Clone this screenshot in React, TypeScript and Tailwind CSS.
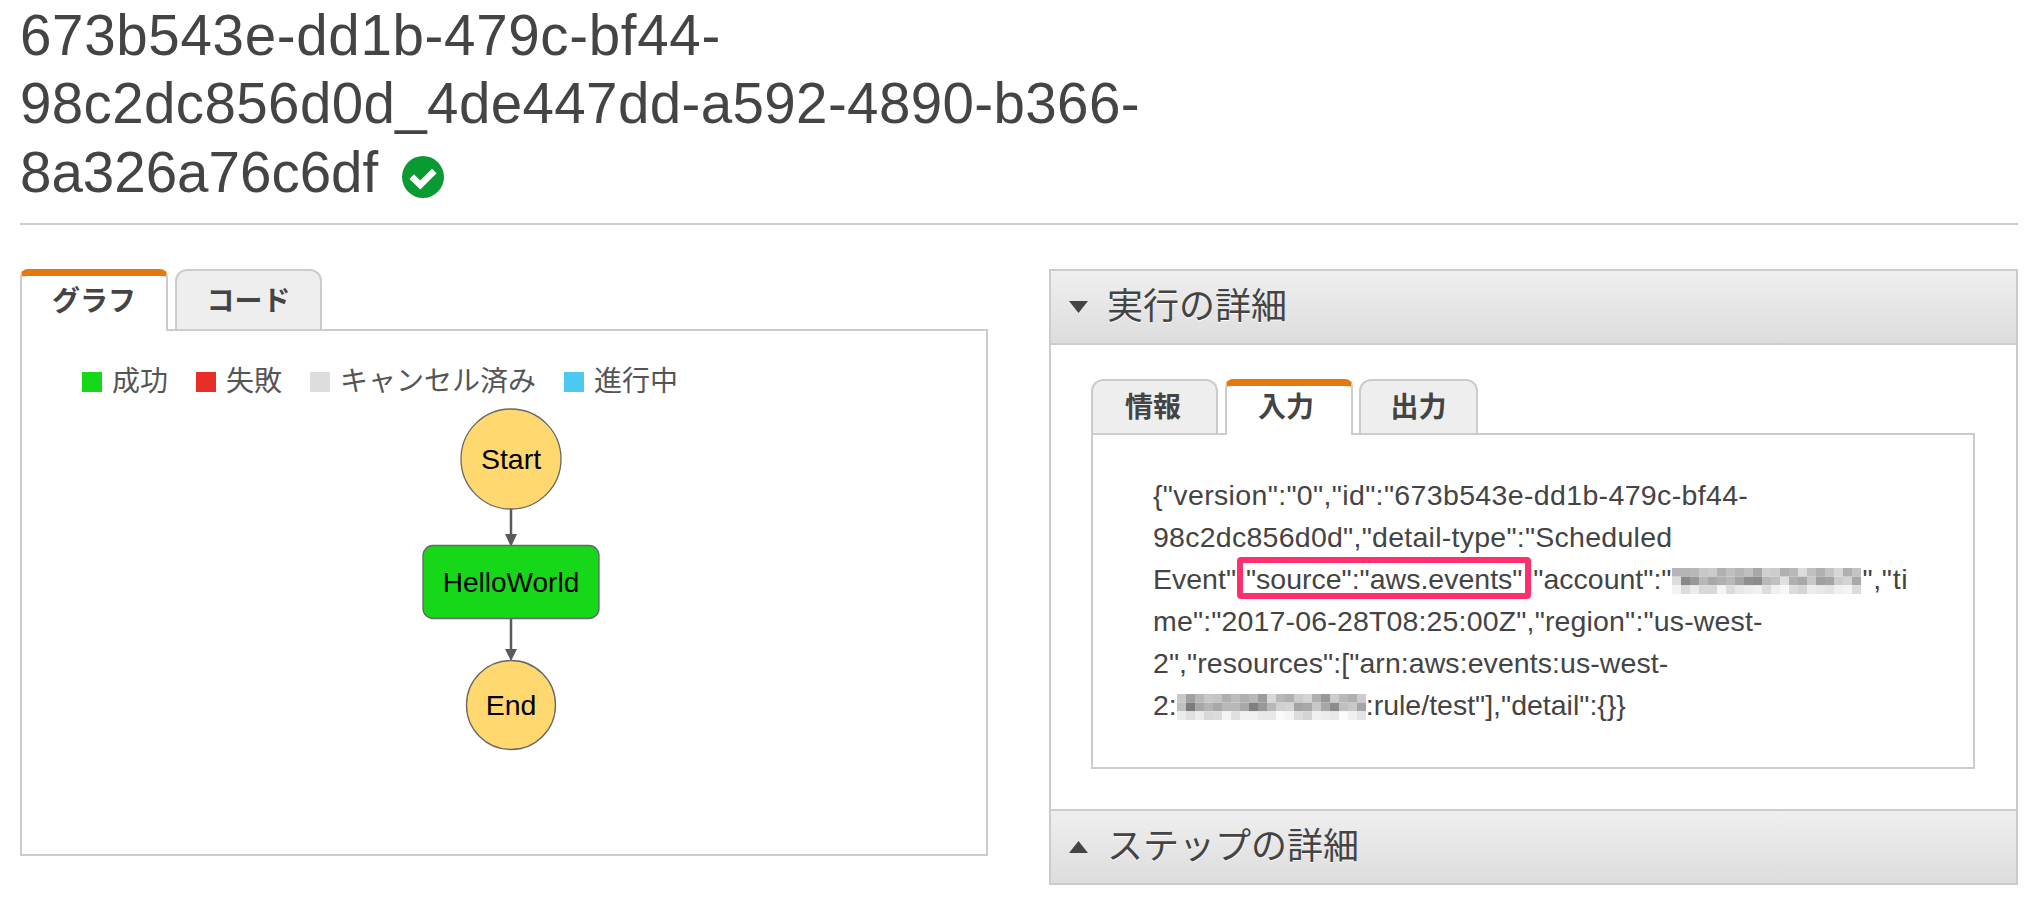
const blurA = [
  ["b5","b5","b8","c8","cc","b0","c0","b5","c0","a8","d0","cc","b0","b8","dc","c0","b0","c4","d8","b0","c4"],
  ["dc","88","98","b8","a8","b0","b8","a4","90","8c","b8","c0","e0","b0","a8","c8","a0","a4","cc","d4","a8"],
  ["f4","dc","ec","d8","d8","f4","dc","e8","ec","f0","dc","f0","f8","dc","d4","ec","e8","e4","f0","f4","dc"],
];
const blurB = [
  ["c8","a0","b8","c8","c4","b0","bc","b0","b8","9c","d8","b8","b0","cc","d4","b0","98","cc","b8","b0","cc"],
  ["c0","7c","a8","b4","a8","b8","b8","a8","80","98","b8","d0","d4","a4","a8","c8","a8","8c","c0","c8","a4"],
  ["ec","e0","ec","d8","dc","f4","e0","f0","f0","e8","e8","fa","f4","dc","d4","f0","ec","e8","fb","f0","e4"],
];

function Blur({ cells, className }: { cells: string[][]; className?: string }) {
  return (
    <svg width="189" height="26" viewBox="0 0 189 26" className={`inline-block align-middle ${className ?? ""}`}>
      {cells.map((row, y) =>
        row.map((c, x) => <rect key={`${x}-${y}`} x={x * 9} y={y * 8.67} width="9" height="8.67" fill={`#${c}${c}${c}`} />),
      )}
    </svg>
  );
}

function OuterTab({ label, active, className }: { label: string; active?: boolean; className: string }) {
  return (
    <div
      className={
        active
          ? `${className} relative -mb-[2px] h-[62px] rounded-t-[8px] border-x-2 border-t-[7px] border-x-[#cccccc] border-t-[#e47911] bg-white text-center text-[28px] leading-[51px] font-bold text-[#444444]`
          : `${className} h-[60px] rounded-t-[12px] border-x-2 border-t-2 border-[#cccccc] bg-[#eeeeee] text-center text-[28px] leading-[61px] font-bold text-[#444444]`
      }
    >
      {label}
    </div>
  );
}

function InnerTab({ label, active, className }: { label: string; active?: boolean; className: string }) {
  return (
    <div
      className={
        active
          ? `${className} relative -mb-[2px] h-[56px] rounded-t-[8px] border-x-2 border-t-[7px] border-x-[#cccccc] border-t-[#e47911] bg-white text-center text-[28px] leading-[43px] font-bold text-[#444444]`
          : `${className} h-[54px] rounded-t-[12px] border-x-2 border-t-2 border-[#cccccc] bg-[#eeeeee] text-center text-[28px] leading-[53px] font-bold text-[#444444]`
      }
    >
      {label}
    </div>
  );
}

function Legend({ color, label }: { color: string; label: string }) {
  return (
    <div className="flex items-center gap-[10px]">
      <span className={`h-[20px] w-[20px] ${color}`} />
      <span className="text-[28px] leading-[28px] text-[#555555]">{label}</span>
    </div>
  );
}

function Header({ label, up }: { label: string; up?: boolean }) {
  return (
    <div className="flex h-[72px] items-center gap-[19px] bg-gradient-to-b from-[#efefef] to-[#dddddd] pl-[18px]">
      <svg width="19" height="12" viewBox="0 0 19 12">
        <path d={up ? "M0 12 L9.5 0 L19 12 Z" : "M0 0 L19 0 L9.5 12 Z"} fill="#444444" />
      </svg>
      <span className="text-[36px] leading-[44px] text-[#444444] [text-shadow:0_1px_0_#ffffff]">{label}</span>
    </div>
  );
}

export default function App() {
  return (
    <div className="h-[902px] w-[2032px] overflow-hidden bg-white font-['Liberation_Sans','Noto_Sans_CJK_JP',sans-serif]">
      <div className="mx-[20px]">
        <h1 className="h-[223px] pt-[1.5px] text-[56.5px] leading-[68.5px] font-normal text-[#444444]">
          <span className="block tracking-[0.67px]">673b543e-dd1b-479c-bf44-</span>
          <span className="block tracking-[0.38px]">98c2dc856d0d_4de447dd-a592-4890-b366-</span>
          <span className="block">
            8a326a76c6df
            <svg width="42" height="42" viewBox="0 0 42 42" className="ml-[24px] inline-block align-[-6px]">
              <circle cx="21" cy="21" r="21" fill="#0a9a32" />
              <path d="M9.7 20.7 L18.3 29 L32.3 15" fill="none" stroke="#ffffff" strokeWidth="6.5" />
            </svg>
          </span>
        </h1>
        <div className="h-[2px] w-[1998px] bg-[#cccccc]" />
      </div>

      <div className="mt-[44px] ml-[20px] flex gap-[61px]">
        <div className="w-[968px]">
          <div className="relative z-10 flex gap-[7px]">
            <OuterTab label="グラフ" active className="w-[148px]" />
            <OuterTab label="コード" className="w-[147px]" />
          </div>
          <div className="h-[527px] border-2 border-[#cccccc] pt-[37px]">
            <div className="flex gap-[28px] pl-[60px]">
              <Legend color="bg-[#15d818]" label="成功" />
              <Legend color="bg-[#e52f27]" label="失敗" />
              <Legend color="bg-[#dddddd]" label="キャンセル済み" />
              <Legend color="bg-[#4cc9f0]" label="進行中" />
            </div>
            <svg width="200" height="350" viewBox="411 405 200 350" className="mt-[9px] ml-[389px] block">
              <path d="M511 509 V536 M511 619 V650" stroke="#5a5a5a" strokeWidth="2.5" fill="none" />
              <path d="M505 534 H517 L511 547 Z M505 649 H517 L511 661 Z" fill="#5a5a5a" />
              <circle cx="511" cy="459" r="50" fill="#ffd96f" stroke="#666666" strokeWidth="1.3" />
              <rect x="423" y="545.5" width="176" height="73" rx="10" fill="#17d818" stroke="#666666" strokeWidth="1.3" />
              <circle cx="511" cy="705" r="44.5" fill="#ffd96f" stroke="#666666" strokeWidth="1.3" />
              <text x="511" y="469" textAnchor="middle" fontSize="28.5" fill="#000000">Start</text>
              <text x="511" y="592" textAnchor="middle" fontSize="28" fill="#000000">HelloWorld</text>
              <text x="511" y="715" textAnchor="middle" fontSize="28.5" fill="#000000">End</text>
            </svg>
          </div>
        </div>

        <div className="w-[969px] border-2 border-[#cccccc]">
          <Header label="実行の詳細" />
          <div className="border-y-2 border-[#cccccc] px-[40px] pt-[34px] pb-[40px]">
            <div className="relative z-10 flex">
              <InnerTab label="情報" className="mr-[7px] w-[127px] pr-[3px]" />
              <InnerTab label="入力" active className="mr-[6px] w-[128px] pr-[6px]" />
              <InnerTab label="出力" className="w-[119px]" />
            </div>
            <div className="h-[336px] w-[884px] border-2 border-[#cccccc] pt-[39px] pl-[60px] text-[28.5px] leading-[42px] whitespace-nowrap text-[#444444]">
              <div className="h-[42px] tracking-[0.35px]">{'{"version":"0","id":"673b543e-dd1b-479c-bf44-'}</div>
              <div className="h-[42px] tracking-[0.26px]">{'98c2dc856d0d","detail-type":"Scheduled'}</div>
              <div className="h-[42px]">
                {'Event",'}
                <span className="relative -mt-px mr-[-6px] ml-[-7px] inline-block h-[42px] rounded-[4px] border-[6px] border-[#fe2f6e] bg-white px-[3px] align-top leading-[32px]">
                  {'"source":"aws.events"'}
                </span>
                {',"account":"'}
                <Blur cells={blurA} className="mx-px" />
                <span className="tracking-[0.7px]">{'","ti'}</span>
              </div>
              <div className="h-[42px] tracking-[0.16px]">{'me":"2017-06-28T08:25:00Z","region":"us-west-'}</div>
              <div className="h-[42px] tracking-[0.07px]">{'2","resources":["arn:aws:events:us-west-'}</div>
              <div className="h-[42px]">
                {'2:'}
                <Blur cells={blurB} />
                {':rule/test"],"detail":{}}'}
              </div>
            </div>
          </div>
          <Header label="ステップの詳細" up />
        </div>
      </div>
    </div>
  );
}
